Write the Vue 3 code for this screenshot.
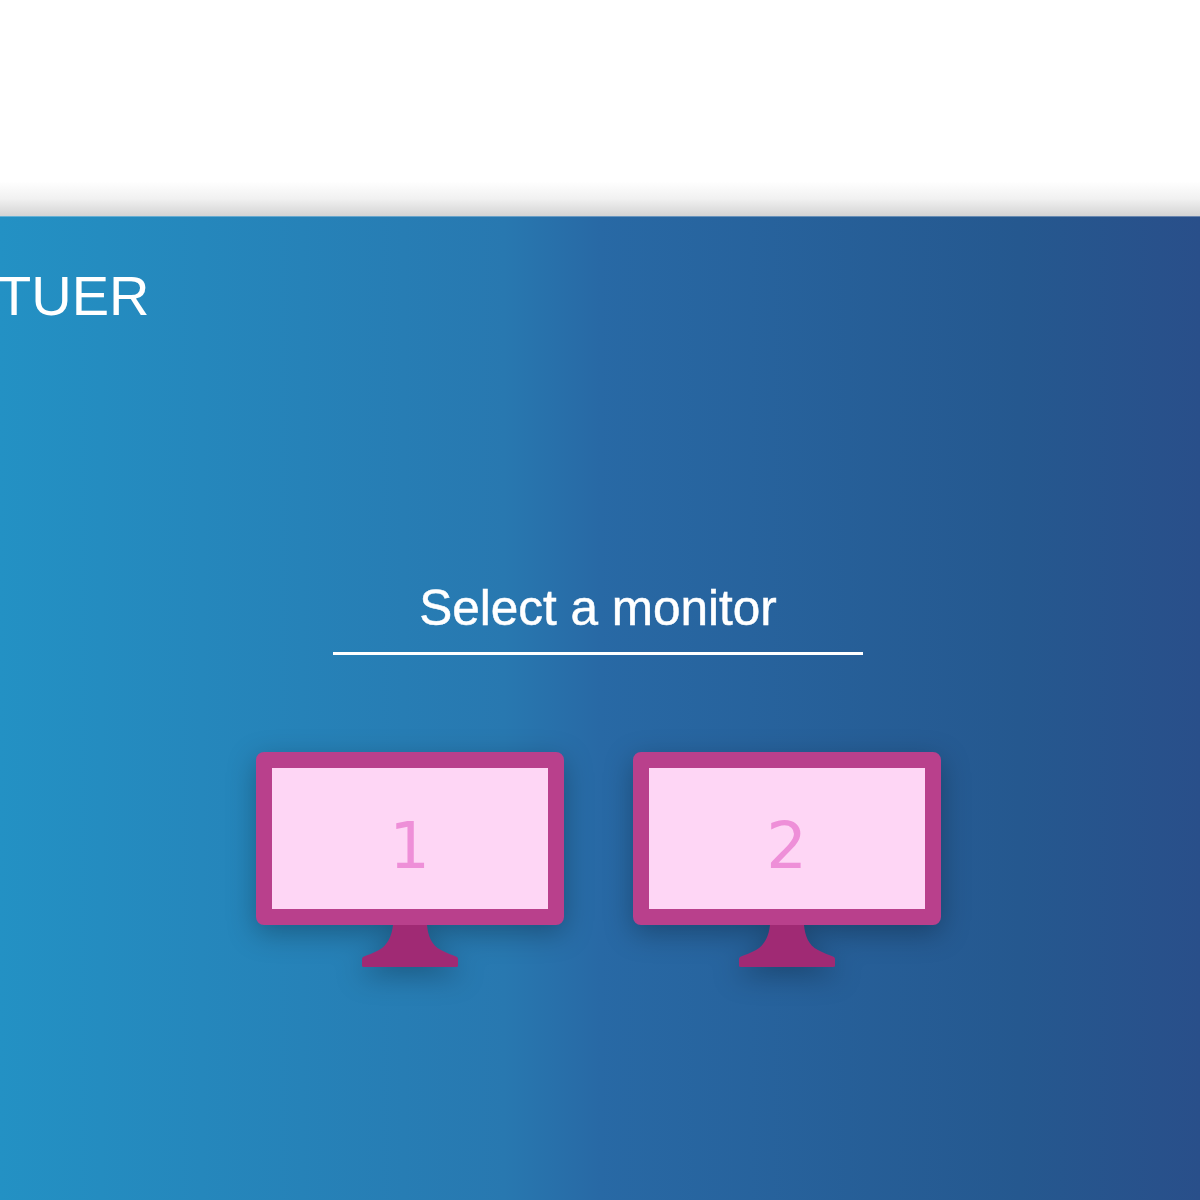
<template>
  <div class="page">
    <header class="top-bar"></header>
    <main class="content">
      <h1 class="title">TUER</h1>
      <div class="picker">
        <h2 class="picker-label">Select a monitor</h2>
        <div class="monitors">
          <div v-for="n in monitors" :key="n" class="monitor">
            <div class="screen">{{ n }}</div>
            <svg class="stand" width="98" height="42" viewBox="0 0 98 42">
              <path d="M32 0H66C67 10 70 20 80 25C85 28 92 30 96 32Q97 33 97 34V41Q97 42 95 42H3Q1 42 1 41V34Q1 33 2 32C6 30 13 28 18 25C27 20 31 10 32 0Z" fill="#a02a74" />
            </svg>
          </div>
        </div>
      </div>
    </main>
  </div>
</template>

<script setup>
const monitors = [1, 2];
</script>

<style>
html, body {
  margin: 0;
  background: #fff;
  overflow: hidden;
}
</style>

<style scoped>
.page {
  width: 1200px;
  height: 1200px;
  display: flex;
  flex-direction: column;
  font-family: "Liberation Sans", Arial, sans-serif;
  overflow: hidden;
}

.top-bar {
  height: 216px;
  flex: none;
  background: linear-gradient(to bottom, #fff 84%, #f1f1f1 92%, #d4d4d4 100%);
}

.content {
  flex: 1;
  background: linear-gradient(90deg, #2391c4 0%, #2878b0 42%, #2869a5 50%, #25588f 85%, #294f8a 100%);
  border-top: 1px solid rgba(255, 255, 255, 0.3);
  background-origin: border-box;
  color: #fff;
}

.title {
  margin: 47px 0 0 -3px;
  font-size: 56px;
  line-height: 64px;
  font-weight: 400;
  filter: blur(0.6px);
}

.picker {
  margin: 252px 4px 0 0;
  display: flex;
  flex-direction: column;
  align-items: center;
}

.picker-label {
  width: 530px;
  margin: 0;
  padding-bottom: 16px;
  border-bottom: 3px solid #fff;
  text-align: center;
  font-size: 49.5px;
  line-height: 56px;
  font-weight: 400;
  -webkit-text-stroke: 0.5px #fff;
  filter: blur(0.6px);
}

.monitors {
  margin-top: 97px;
  display: flex;
  gap: 69px;
}

.monitor {
  width: 308px;
  display: flex;
  flex-direction: column;
  align-items: center;
  filter: blur(0.7px) drop-shadow(0 8px 14px rgba(0, 0, 0, 0.28));
}

.screen {
  width: 100%;
  height: 173px;
  box-sizing: border-box;
  border: 16px solid #b9408c;
  border-radius: 8px;
  background: #fed6f5;
  color: #ee8fd8;
  display: flex;
  align-items: center;
  justify-content: center;
  font-family: "DejaVu Sans", sans-serif;
  font-weight: 400;
  font-size: 64px;
  line-height: 1;
  padding-top: 14px;
}

.stand {
  display: block;
}
</style>
